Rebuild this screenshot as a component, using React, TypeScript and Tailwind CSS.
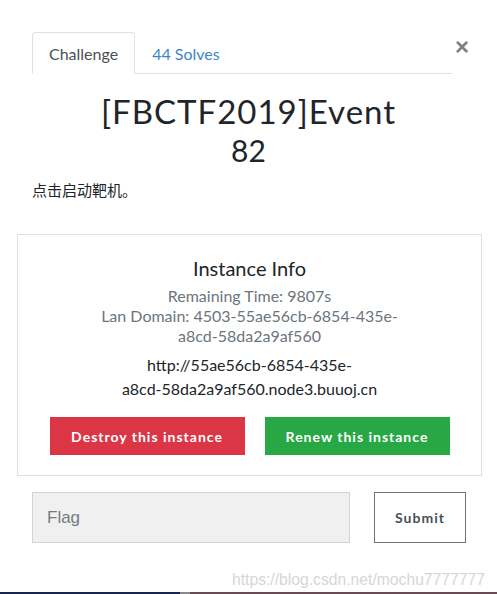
import React from "react";

export default function App() {
  return (
    <div
      className="relative w-[497px] h-[594px] bg-white overflow-hidden"
      style={{ fontFamily: "Lato, 'Noto Sans CJK SC', sans-serif" }}
    >
      <div className="pl-[32px] pr-[32px] pt-[32px]">
        {/* Tabs row */}
        <div className="flex items-start">
          <div className="flex w-[420px] border-b border-[#dee2e6]">
            <div className="h-[42px] -mb-px px-[16px] pt-[2px] flex items-center border border-[#dee2e6] border-b-white rounded-t-[4px] bg-white text-[16px] text-[#495057]">
              Challenge
            </div>
            <div className="h-[41px] px-[17px] pt-[2px] flex items-center text-[16px] text-[#3d86c8]">
              44 Solves
            </div>
          </div>
          <div className="ml-auto -mr-[4px] mt-[3px] text-[24px] leading-[24px] font-bold text-[#808080]" style={{ fontFamily: "'Liberation Sans', Arial, sans-serif" }}>
            ×
          </div>
        </div>

        {/* Title */}
        <div className="text-center mt-[17px]">
          <div className="text-[33px] leading-[40px] text-[#212529] tracking-[1px]">[FBCTF2019]Event</div>
          <div className="text-[30px] leading-[36px] text-[#212529] mt-[1px]">82</div>
        </div>

        <div className="mt-[10px] text-[15px] leading-[24px] text-[#212529]" style={{ fontFamily: "'Noto Sans CJK SC', sans-serif" }}>
          点击启动靶机。
        </div>
      </div>

      {/* Instance box */}
      <div className="mx-[17px] mt-[32px] w-[465px] h-[242px] border border-[#dfdfdf] flex flex-col items-center">
        <div className="mt-[21px] text-[20px] leading-[24px] text-[#212529]">Instance Info</div>
        <div className="mt-[6px] text-center text-[16px] leading-[20px] text-[#6c757d]">
          Remaining Time: 9807s
          <br />
          Lan Domain: 4503-55ae56cb-6854-435e-
          <br />
          a8cd-58da2a9af560
        </div>
        <div className="mt-[7px] text-center text-[16px] leading-[24px] text-[#212529]">
          http://55ae56cb-6854-435e-
          <br />
          a8cd-58da2a9af560.node3.buuoj.cn
        </div>
        <div className="mt-[16px] flex gap-[20px]">
          <button className="w-[195px] h-[38px] bg-[#dc3545] text-white text-[14px] font-bold tracking-[1px]">
            Destroy this instance
          </button>
          <button className="w-[185px] h-[38px] bg-[#28a745] text-white text-[14px] font-bold tracking-[1px]">
            Renew this instance
          </button>
        </div>
      </div>

      {/* Flag row */}
      <div className="flex mt-[16px] pl-[32px]">
        <div
          className="w-[318px] h-[51px] bg-[#f0f0f0] border border-[#ced4da] flex items-center pl-[14px] text-[17px] text-[#777b80]"
          style={{ fontFamily: "'Liberation Sans', Arial, sans-serif" }}
        >
          Flag
        </div>
        <button className="ml-[24px] w-[92px] h-[51px] border border-[#6c757d] text-[14px] font-bold tracking-[1px] text-[#495057]">
          Submit
        </button>
      </div>

      {/* Watermark */}
      <div
        className="absolute left-[232px] top-[570px] text-[15.7px] leading-[20px] text-[#d6d6d6] whitespace-nowrap"
        style={{ fontFamily: "'Liberation Sans', Arial, sans-serif" }}
      >
        https://blog.csdn.net/mochu7777777
      </div>

      {/* bottom strip */}
      <div className="absolute left-0 bottom-0 w-full h-[2px] flex">
        <div className="w-[180px] bg-[#1a2450]" />
        <div className="w-[10px] bg-[#8a8a8a]" />
        <div className="flex-1 bg-[#6a4a55]" />
      </div>
    </div>
  );
}
